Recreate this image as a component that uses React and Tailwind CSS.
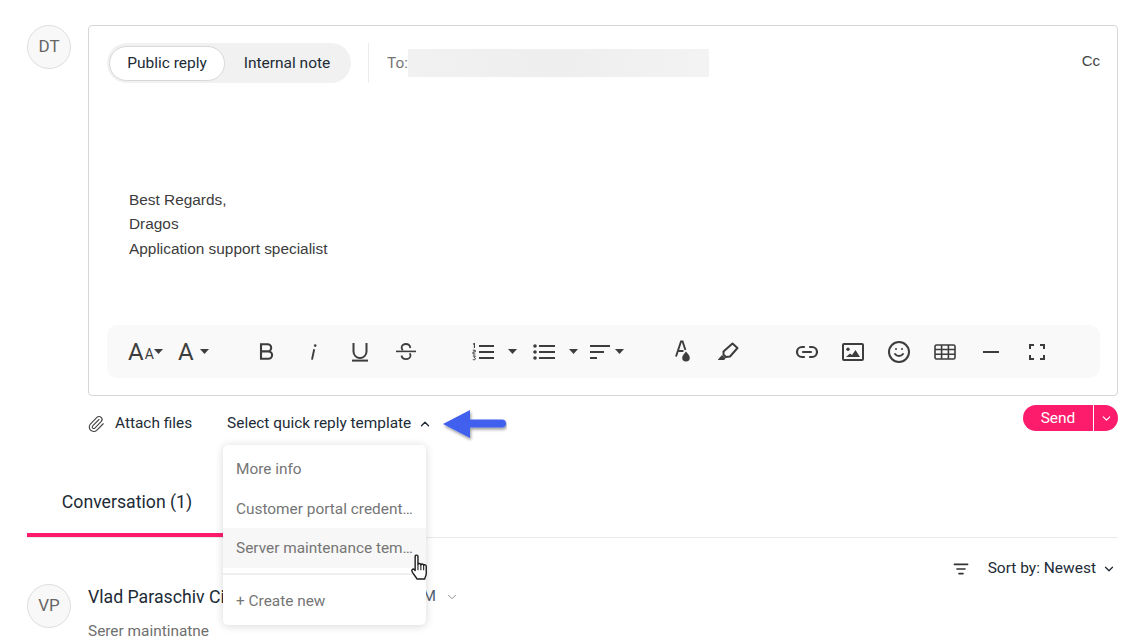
import React from "react";
import { ChevronDown, ChevronUp, Paperclip, Link2, Smile, ListFilter } from "lucide-react";

const INK = "#3d3d3d";

const Caret = () => (
  <svg width="9" height="5" viewBox="0 0 9 5" className="shrink-0"><path d="M0 0h9L4.5 5z" fill={INK} /></svg>
);

const Slot = ({ w, children, className = "" }) => (
  <div className={`flex items-center justify-center h-full shrink-0 ${w} ${className}`}>{children}</div>
);

function Toolbar() {
  return (
    <div className="mt-auto ml-[18px] mr-[17px] h-[53px] rounded-[10px] bg-[#f9f9f9] flex items-center pl-[21px] text-[#3d3d3d]">
      <div className="flex items-center h-full w-[34px] shrink-0">
        <span className="text-[24px] leading-none">A</span>
        <span className="text-[14px] leading-none mt-[5px] ml-[1px]">A</span>
        <span><Caret /></span>
      </div>
      <div className="flex items-center h-full w-[30px] ml-[16px] shrink-0">
        <span className="text-[24px] leading-none">A</span>
        <span className="ml-[6px]"><Caret /></span>
      </div>
      <Slot w="w-[24px]" className="ml-[47px]">
        <svg width="16" height="17" viewBox="0 0 16 17" fill="none" stroke={INK} strokeWidth="2.1">
          <path d="M2 1.2h6.6a3.6 3.6 0 0 1 0 7.2H2zM2 8.4h7.4a3.7 3.7 0 0 1 0 7.4H2z" />
        </svg>
      </Slot>
      <Slot w="w-[24px]" className="ml-[22px]">
        <svg width="10" height="16" viewBox="0 0 10 16" fill="none">
          <circle cx="7.2" cy="1.6" r="1.3" fill={INK} />
          <path d="M6.2 5.2L4 15.6" stroke={INK} strokeWidth="1.9" />
        </svg>
      </Slot>
      <Slot w="w-[24px]" className="ml-[23px]">
        <svg width="18" height="20" viewBox="0 0 18 20" fill="none" stroke={INK} strokeWidth="2">
          <path d="M2.5 1v8.5a6.5 6.5 0 0 0 13 0V1" /><path d="M1 18.6h16" />
        </svg>
      </Slot>
      <Slot w="w-[24px]" className="ml-[22px]">
        <svg width="20" height="17" viewBox="0 0 20 17" fill="none" stroke={INK} strokeWidth="1.8">
          <path d="M0 8.4h20" strokeWidth="1.6" />
          <path d="M14.4 5C14 2.6 12.2 1 10 1 7.6 1 5.6 2.5 5.6 4.6c0 1 .4 1.9 1.2 2.6M13.6 10.4c.6.6.9 1.3.9 2.1 0 2.1-2 3.6-4.5 3.6-2.3 0-4.1-1.4-4.5-3.6" />
        </svg>
      </Slot>
      {/* ordered list */}
      <Slot w="w-[22px]" className="ml-[54px]">
        <svg width="22" height="18" viewBox="0 0 22 18" fill="none" stroke={INK}>
          <path d="M7 3h15M7 9h15M7 15h15" strokeWidth="2" />
          <path d="M1 1.2l1.4-.7V5" strokeWidth="1.1" />
          <path d="M.8 7.2h2.4V9H1v2h2.4" strokeWidth="1" />
          <path d="M.8 13h2.6l-1.3 1.8c1 0 1.4.4 1.4 1 0 .8-1.4 1.2-2.7.8" strokeWidth="1" />
        </svg>
      </Slot>
      <Slot w="w-[9px]" className="ml-[14px]"><Caret /></Slot>
      <Slot w="w-[22px]" className="ml-[16px]">
        <svg width="22" height="16" viewBox="0 0 22 16" fill={INK}>
          <circle cx="2" cy="2" r="1.8" /><circle cx="2" cy="8" r="1.8" /><circle cx="2" cy="14" r="1.8" />
          <rect x="6" y="1" width="16" height="2" /><rect x="6" y="7" width="16" height="2" /><rect x="6" y="13" width="16" height="2" />
        </svg>
      </Slot>
      <Slot w="w-[9px]" className="ml-[14px]"><Caret /></Slot>
      <Slot w="w-[20px]" className="ml-[12px]">
        <svg width="20" height="16" viewBox="0 0 20 16" fill={INK}>
          <rect y="1" width="20" height="2" /><rect y="7" width="14" height="2" /><rect y="13" width="7" height="2" />
        </svg>
      </Slot>
      <Slot w="w-[9px]" className="ml-[5px]"><Caret /></Slot>
      {/* fill colour */}
      <Slot w="w-[16px]" className="ml-[51px]">
        <svg width="16" height="23" viewBox="0 0 16 23" fill="none">
          <path d="M1 16.5L6 1.5h1.6L10.4 10M3 11h5.5" stroke={INK} strokeWidth="1.9" />
          <path d="M11 11.5c2 2.6 3.8 4.3 3.8 6.3a3.8 3.8 0 0 1-7.6 0c0-2 1.8-3.7 3.8-6.3z" fill={INK} />
        </svg>
      </Slot>
      {/* highlighter */}
      <Slot w="w-[22px]" className="ml-[26px]">
        <svg width="22" height="19" viewBox="0 0 22 19" fill="none">
          <path d="M6.5 9.5L15.5 1.5l5 4.5-7.5 8.5-4.2.5-2.3-2.5z" stroke={INK} strokeWidth="2" strokeLinejoin="round" />
          <path d="M1 17.5l4-4.5 3.6 3.2-1.4 1.8H1z" fill={INK} />
        </svg>
      </Slot>
      <Slot w="w-[24px]" className="ml-[56px]"><Link2 size={24} strokeWidth={2.2} color={INK} /></Slot>
      <Slot w="w-[24px]" className="ml-[22px]">
        <svg width="22" height="18" viewBox="0 0 22 18" fill="none">
          <rect x="1" y="1" width="20" height="16" rx="1" stroke={INK} strokeWidth="2" />
          <circle cx="6" cy="6.2" r="1.7" fill={INK} />
          <path d="M4 14l4-3.5 2 1.5 3.5-5 4.5 7z" fill={INK} />
        </svg>
      </Slot>
      <Slot w="w-[24px]" className="ml-[22px]"><Smile size={24} strokeWidth={2} color={INK} /></Slot>
      <Slot w="w-[24px]" className="ml-[22px]">
        <svg width="22" height="16" viewBox="0 0 22 16" fill="none" stroke={INK} strokeWidth="1.6">
          <rect x="1" y="1" width="20" height="14" rx="1.5" /><path d="M1 5.5h20M1 10.2h20M7.6 1v14M14.4 1v14" />
        </svg>
      </Slot>
      <Slot w="w-[24px]" className="ml-[22px]"><svg width="16" height="2" viewBox="0 0 16 2"><rect width="16" height="2" fill={INK} /></svg></Slot>
      <Slot w="w-[24px]" className="ml-[22px]">
        <svg width="16" height="16" viewBox="0 0 16 16" fill="none" stroke={INK} strokeWidth="2">
          <path d="M1 5V1h4M11 1h4v4M15 11v4h-4M5 15H1v-4" />
        </svg>
      </Slot>
    </div>
  );
}

function Dropdown() {
  return (
    <div className="absolute left-[223px] top-[445px] w-[203px] h-[180px] bg-white rounded-[5px] shadow-[0_1px_8px_rgba(0,0,0,0.16)] text-[15.4px] text-[#757575] z-10">
      <div className="h-[43px] px-[13px] flex items-center pt-[7px]">More info</div>
      <div className="h-[40px] px-[13px] flex items-center pt-[3px]"><span className="truncate">Customer portal credentials</span></div>
      <div className="h-[40px] px-[13px] flex items-center pt-[2px] bg-[#f7f7f7]"><span className="truncate">Server maintenance template</span></div>
      <div className="mt-[5px] h-[2px] bg-[#efefef]" />
      <div className="h-[50px] px-[13px] flex items-center pt-[4px]">+ Create new</div>
      <svg className="absolute left-[187px] top-[109px]" width="20" height="28" viewBox="0 0 18 26">
        <path d="M4.5 2.2c0-1.6 2.6-1.6 2.6 0v7.5c.5-1.4 2.6-1.2 2.7.4.5-1.2 2.5-1 2.6.5.6-1 2.4-.7 2.4.9v6.5c0 2-1 3.4-1.5 5.2H6.2c-1-2.2-3.8-5-4.6-7-.7-1.8 1-2.8 2.2-1.7l.7.9z" fill="#fff" stroke="#1c1c1c" strokeWidth="1.3" strokeLinejoin="round" />
        <path d="M7.1 10v5M9.8 10.2V15M12.4 11v4" stroke="#1c1c1c" strokeWidth="1" />
      </svg>
    </div>
  );
}

export default function App() {
  return (
    <div className="relative w-[1145px] h-[642px] overflow-hidden bg-white text-[#212b36]" style={{ fontFamily: "Roboto, sans-serif" }}>
      <div className="pl-[27px] pr-[27px] pt-[25px]">
        {/* Composer */}
        <div className="flex">
          <div className="w-[44px] h-[44px] rounded-full border border-[#dedede] bg-[#f8f8f8] flex items-center justify-center text-[17px] text-[#666] shrink-0">DT</div>
          <div className="ml-[17px] flex-1 h-[371px] border border-[#d6d6d6] rounded-[4px] flex flex-col pb-[17px]">
            <div className="flex items-start pt-[17px] pl-[18px] pr-[17px]">
              <div className="w-[244px] h-[40px] rounded-full bg-[#f1f1f1] flex items-center text-[15.5px]">
                <div className="w-[116px] h-[35px] ml-[2px] pt-[1px] rounded-full bg-white border border-[#d8d8d8] flex items-center justify-center">Public reply</div>
                <div className="flex-1 text-center pr-[2px] pt-[1px]">Internal note</div>
              </div>
              <div className="ml-[17px] w-px h-[40px] bg-[#ececec]" />
              <div className="ml-[18px] w-[21px] shrink-0 h-[40px] flex items-center pt-[1px] text-[15.4px] text-[#757575]">To:</div>
              <div className="mt-[6px] w-[301px] h-[28px] bg-gradient-to-r from-[#f1f1f1] via-[#eeeeee] to-[#f3f3f3]" />
              <div className="ml-auto mt-[7px] text-[15px] text-[#444]" style={{ fontFamily: '"Liberation Sans", sans-serif' }}>Cc</div>
            </div>
            <div className="pl-[40px] mt-[104.5px] text-[15.4px] leading-[24.5px] text-[#3c3c3c]" style={{ fontFamily: '"Liberation Sans", sans-serif' }}>
              <div>Best Regards,</div>
              <div>Dragos</div>
              <div>Application support specialist</div>
            </div>
            <Toolbar />
          </div>
        </div>

        {/* Actions */}
        <div className="flex items-start ml-[60px] mt-[9px] h-[40px]">
          <div className="flex items-center h-[36px] text-[15.4px] pt-[1px]">
            <Paperclip size={18} strokeWidth={1.5} className="text-[#444]" />
            <span className="ml-[10px]">Attach files</span>
            <span className="ml-[35px]">Select quick reply template</span>
            <ChevronUp size={14} strokeWidth={2.4} className="ml-[7px]" />
            <svg className="ml-[9px]" width="66" height="36" viewBox="0 0 66 36">
              <defs>
                <filter id="s" x="-20%" y="-20%" width="140%" height="150%"><feDropShadow dx="1" dy="2" stdDeviation="1.5" floodColor="#000" floodOpacity="0.4" /></filter>
              </defs>
              <path d="M2 18L29 4v9.5h32a3 3 0 0 1 0 8H29V32z" fill="#4261ee" filter="url(#s)" />
            </svg>
          </div>
          <div className="ml-auto flex h-[26px] rounded-full overflow-hidden bg-[#fc1c6b] text-white text-[15.5px]">
            <div className="w-[70px] pt-[1px] flex items-center justify-center">Send</div>
            <div className="w-px bg-white" />
            <div className="w-[24px] flex items-center justify-center"><ChevronDown size={13} strokeWidth={2.2} /></div>
          </div>
        </div>

        {/* Tabs */}
        <div className="mt-[28px] h-[65px] border-b border-[#e9e9e9]">
          <div className="w-[200px] h-[64px] border-b-4 border-[#fc1c6b] flex items-start justify-center text-[17.7px] leading-[24px]">
            <span className="mt-[17px]">Conversation (1)</span>
          </div>
        </div>

        {/* Sort */}
        <div className="flex items-center justify-end h-[20px] mt-[21px] text-[15.5px]">
          <ListFilter size={16} strokeWidth={2.4} className="text-[#333]" />
          <span className="ml-[19px]">Sort by: Newest</span>
          <ChevronDown size={14} strokeWidth={2.2} className="ml-[6px] mr-[2px]" />
        </div>

        {/* Message */}
        <div className="flex mt-[5px]">
          <div className="w-[44px] h-[44px] rounded-full border border-[#dedede] bg-[#f8f8f8] flex items-center justify-center text-[17px] text-[#666] shrink-0">VP</div>
          <div className="ml-[17px]">
            <div className="flex items-center h-[26px] text-[17.7px] w-[371px]">
              <span className="truncate">Vlad Paraschiv Ciobanu</span>
              <span className="ml-auto text-[#4d5d70] text-[15.4px]">12:00 PM</span>
              <ChevronDown size={14} strokeWidth={1.6} className="ml-[9px] text-[#888]" />
            </div>
            <div className="mt-[10px] text-[15.4px] leading-[22px] text-[#6f6f6f]">Serer maintinatne</div>
          </div>
        </div>
      </div>
      <Dropdown />
    </div>
  );
}
